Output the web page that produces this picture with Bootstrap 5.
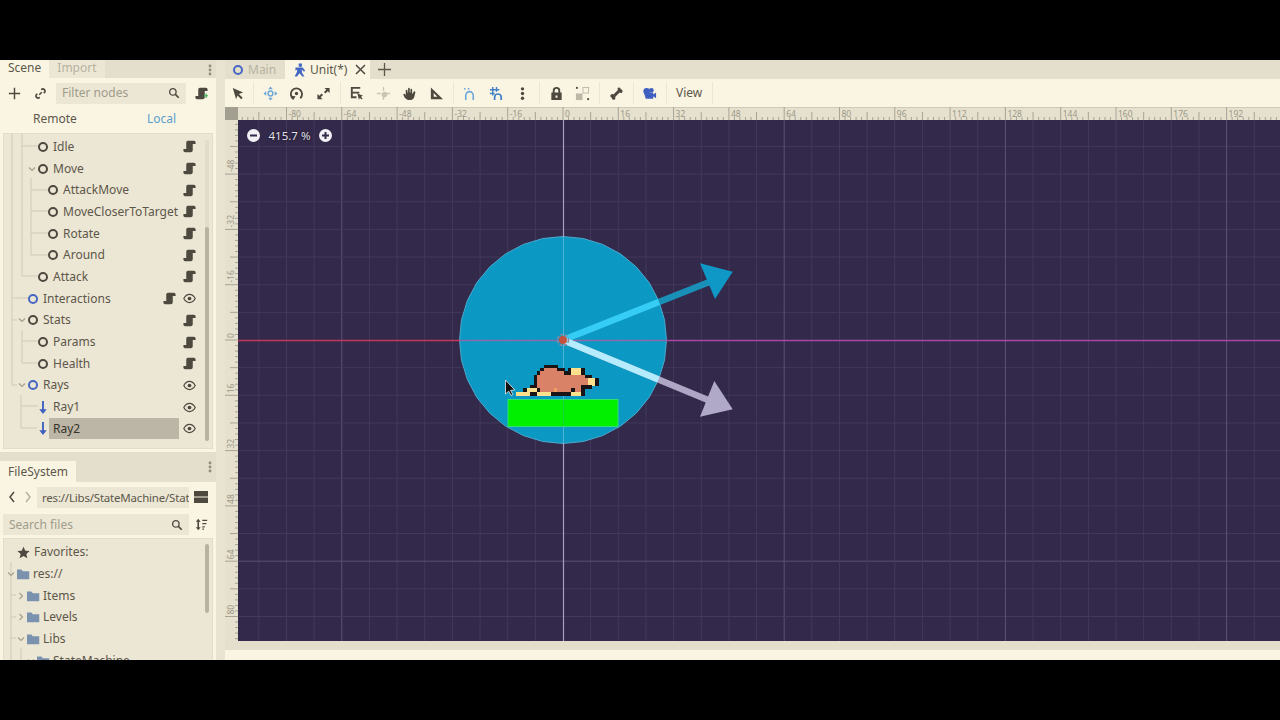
<!DOCTYPE html>
<html lang="en">
<head>
  <meta charset="UTF-8">
  <title>Godot Editor - Unit</title>
  <link rel="stylesheet" href="https://cdn.jsdelivr.net/npm/bootstrap@5.3.0/dist/css/bootstrap.min.css">
  <style>
    body { background: #000; font-family: "Noto Sans", "Liberation Sans", sans-serif; font-size: 12px; color: #5c574a; width: 1280px; height: 720px; overflow: hidden; }
    .gd-band { height: 60px; background: #000; }
    .gd-editor { height: 600px; background: #e9e4d1; overflow: hidden; }
    .gd-dock { width: 225px; }
    .gd-panel { width: 216px; background: #faf5e3; overflow: hidden; }
    .gd-strip { height: 18px; background: #e4dfcc; }
    .gd-strip2 { height: 30px; background: #e4dfcc; padding-top: 9px; }
    .gd-tab { height: 100%; padding: 0 8px; background: #faf5e3; line-height: 15px; }
    .gd-tab-off { background: #ece7d5; color: #b7b2a1; padding: 0 8px; }
    .gd-dots { width: 4px; height: 12px; margin-right: 4px; color: #8f8b7e; }
    .gd-field { background: #ece7d5; height: 21px; padding: 0 6px; color: #a09c8c; }
    .gd-scene-tools { height: 30px; padding-left: 8px; }
    .gd-mode { height: 25px; line-height: 21px; }
    .gd-mode-a { width: 107px; padding-left: 33px; }
    .gd-mode-b { color: #5b9dcc; padding-left: 40px; }
    .gd-tree { background: #ece6d4; margin: 0 3px; border: 1px solid #e2dcca; position: relative; overflow: hidden; }
    .gd-tree-scene { height: 316px; padding-top: 2px; }
    .gd-tree-files { height: 122px; padding-top: 2.5px; border-bottom: 0; }
    .gd-guides { position: absolute; left: -1px; top: -1px; pointer-events: none; }
    .gd-row { height: 21.7px; display: flex; align-items: center; padding-right: 16px; white-space: nowrap; position: relative; }
    .gd-d0 { padding-left: 24px; }
    .gd-d1 { padding-left: 34px; }
    .gd-d2 { padding-left: 44px; }
    .gd-node { width: 10px; height: 10px; border: 2px solid #4d493f; border-radius: 50%; margin-right: 5px; flex: none; }
    .gd-node-blue { border-color: #4467c4; }
    .gd-chev { width: 8px; height: 8px; margin-left: -10px; margin-right: 2px; flex: none; color: #a5a08f; }
    .gd-ic { width: 13px; height: 13px; flex: none; color: #4d493f; }
    .gd-row .gd-ic + .gd-ic { margin-left: 7px; }
    .gd-ray { width: 10px; height: 13px; margin-right: 5px; flex: none; color: #3f5fc0; }
    .gd-sel-ray { width: 13px; height: 21px; display: flex; align-items: center; justify-content: center; margin-left: -2px; }
    .gd-sel-ray .gd-ray { margin: 0; }
    .gd-sel-name { width: 130px; height: 21px; line-height: 21px; background: #bcb6a6; color: #37332a; padding-left: 4px; }
    .gd-thumb { position: absolute; right: 3px; width: 4px; background: #b7b2a1; border-radius: 2px; }
    .gd-track { position: absolute; right: 3px; width: 4px; background: #e2dcc9; border-radius: 2px; }
    .gd-fsnav { height: 30px; padding-left: 8px; }
    .gd-navarrow { width: 8px; height: 12px; margin-right: 8px; color: #4d493f; flex: none; }
    .gd-path { width: 152px; color: #5c574a; padding: 0 5px; overflow: hidden; white-space: nowrap; line-height: 21px; font-size: 11.5px; letter-spacing: -.2px; }
    .gd-search-row { height: 25px; padding-left: 3px; margin-bottom: 1px; }
    .gd-folder { width: 12.5px; height: 12px; margin-right: 3.5px; color: #7a92ad; flex: none; }
    .gd-star { width: 13px; height: 13px; margin-right: 4px; color: #4d493f; flex: none; }
    .gd-main { width: 1055px; }
    .gd-doctabs { height: 19px; background: #e4dfcc; }
    .gd-doc { height: 19px; padding: 0 0 0 8px; width: 60px; color: #b7b2a1; }
    .gd-doc-on { width: 85px; background: #faf5e3; color: #5c574a; padding-left: 8px; }
    .gd-toolbar { height: 28px; background: #faf5e3; padding-left: 0; }
    .gd-tb { width: 26.5px; height: 22px; display: flex; align-items: center; justify-content: center; flex: none; }
    .gd-tb svg { width: 15px; height: 15px; color: #4d493f; }
    .gd-sep { width: 1px; height: 22px; background: #ece7d5; margin: 0 3px; flex: none; }
    .gd-view { padding: 0 7px 0 6px; }
    .gd-rulertop { height: 13px; }
    .gd-corner { width: 13px; height: 13px; background: #a29e90; flex: none; }
    .gd-rulerfill { display: block; }
    .gd-canvas-row { height: 521px; }
    .gd-canvas { width: 1042px; height: 521px; background: #33294a; position: relative; overflow: hidden; }
    .gd-zoombar { position: absolute; left: 9px; top: 7px; display: flex; align-items: center; color: #e6e2ee; font-size: 11.5px; text-shadow: 0 0 2px #000; }
    .gd-zoombtn { width: 13px; height: 13px; color: #f2f0f4; flex: none; }
    .gd-zoomval { width: 59px; text-align: center; }
    .gd-bottom { height: 19px; background: linear-gradient(#e4dfcc 0 9px, #faf5e3 9px); }
  </style>
</head>
<body>

<!-- icon set -->
<svg width="0" height="0" class="position-absolute">
  <defs>
    <symbol id="i-script" viewBox="0 0 16 16"><path fill="currentColor" d="M6 1h7.500A2 2 0 0 1 15.500 3v2H12v7.500A2.500 2.500 0 0 1 9.500 15H2.500A2 2 0 0 1 .5 13v-2H4V3A2 2 0 0 1 6 1z"/></symbol>
    <symbol id="i-eye" viewBox="0 0 16 16"><path fill="none" stroke="currentColor" stroke-width="1.500" d="M1 8c2-3.600 4.400-5 7-5s5 1.400 7 5c-2 3.600-4.400 5-7 5s-5-1.400-7-5z"/><circle cx="8" cy="8" r="2.300" fill="currentColor"/></symbol>
    <symbol id="i-down" viewBox="0 0 10 14"><path fill="currentColor" d="M4 0h2v9h3l-4 5-4-5h3z"/></symbol>
    <symbol id="i-chev" viewBox="0 0 8 8"><path fill="none" stroke="currentColor" stroke-width="1.200" d="M1 2.500l3 3 3-3"/></symbol>
    <symbol id="i-chevr" viewBox="0 0 8 8"><path fill="none" stroke="currentColor" stroke-width="1.200" d="M2.500 1l3 3-3 3"/></symbol>
    <symbol id="i-search" viewBox="0 0 16 16"><circle cx="6.500" cy="6.500" r="4.300" fill="none" stroke="currentColor" stroke-width="1.800"/><path stroke="currentColor" stroke-width="2.200" d="M9.800 9.800l4.500 4.500"/></symbol>
    <symbol id="i-folder" viewBox="0 0 14 12"><path fill="currentColor" d="M0 1h5l1.500 2H14v9H0z"/></symbol>
    <symbol id="i-star" viewBox="0 0 16 16"><path fill="currentColor" d="M8 .8l2.200 4.900 5.300.6-4 3.500 1.200 5.300L8 12.300l-4.700 2.800 1.200-5.300-4-3.500 5.300-.6z"/></symbol>
    <symbol id="i-dots" viewBox="0 0 4 12"><circle cx="2" cy="2" r="1.400" fill="currentColor"/><circle cx="2" cy="6" r="1.400" fill="currentColor"/><circle cx="2" cy="10" r="1.400" fill="currentColor"/></symbol>
  </defs>
</svg>

<div class="gd-band"></div>

<div class="gd-editor d-flex">

  <!-- LEFT DOCK -->
  <div class="gd-dock flex-none">
    <div class="gd-panel" style="height:392px">
      <div class="gd-strip d-flex align-items-stretch">
        <div class="gd-tab">Scene</div>
        <div class="gd-tab gd-tab-off">Import</div>
        <svg class="gd-dots ms-auto mt-1"><use href="#i-dots"/></svg>
      </div>
      <div class="gd-scene-tools d-flex align-items-center">
        <svg class="gd-ic" viewBox="0 0 16 16" style="margin-right:13px"><path stroke="currentColor" stroke-width="1.800" d="M8 1v14M1 8h14"/></svg>
        <svg class="gd-ic" viewBox="0 0 16 16" style="margin-right:9px"><path fill="none" stroke="currentColor" stroke-width="2" d="M6.500 9.500l3-3M9 3.500l1-1a2.800 2.800 0 0 1 3.500 3.500l-1.500 1.500M7 12.500l-1 1A2.800 2.800 0 0 1 2.500 10L4 8.500"/></svg>
        <div class="gd-field d-flex align-items-center" style="width:130px">
          <span>Filter nodes</span>
          <svg class="gd-ic ms-auto" viewBox="0 0 16 16" style="width:12px;height:12px"><use href="#i-search"/></svg>
        </div>
        <svg class="gd-ic" viewBox="0 0 16 16" style="margin-left:9px"><use href="#i-script"/><path fill="#43b05a" d="M11 10h2V8h1.500v2h1.500v1.500h-1.500v2H13v-2h-2z"/></svg>
      </div>
      <div class="gd-mode d-flex">
        <div class="gd-mode-a">Remote</div>
        <div class="gd-mode-b">Local</div>
      </div>
      <div class="gd-tree gd-tree-scene">
        <svg class="gd-guides" width="210" height="316" viewBox="3 133 210 316" id="sceneGuides"></svg>
        <div class="gd-track" style="top:6px;height:300px"></div>
        <div class="gd-thumb" style="top:93px;height:214px"></div>
        <div class="gd-row gd-d1"><span class="gd-node"></span>Idle<svg class="gd-ic ms-auto"><use href="#i-script"/></svg></div>
        <div class="gd-row gd-d1"><svg class="gd-chev"><use href="#i-chev"/></svg><span class="gd-node"></span>Move<svg class="gd-ic ms-auto"><use href="#i-script"/></svg></div>
        <div class="gd-row gd-d2"><span class="gd-node"></span>AttackMove<svg class="gd-ic ms-auto"><use href="#i-script"/></svg></div>
        <div class="gd-row gd-d2"><span class="gd-node"></span>MoveCloserToTarget<svg class="gd-ic ms-auto"><use href="#i-script"/></svg></div>
        <div class="gd-row gd-d2"><span class="gd-node"></span>Rotate<svg class="gd-ic ms-auto"><use href="#i-script"/></svg></div>
        <div class="gd-row gd-d2"><span class="gd-node"></span>Around<svg class="gd-ic ms-auto"><use href="#i-script"/></svg></div>
        <div class="gd-row gd-d1"><span class="gd-node"></span>Attack<svg class="gd-ic ms-auto"><use href="#i-script"/></svg></div>
        <div class="gd-row gd-d0"><span class="gd-node gd-node-blue"></span>Interactions<svg class="gd-ic ms-auto"><use href="#i-script"/></svg><svg class="gd-ic"><use href="#i-eye"/></svg></div>
        <div class="gd-row gd-d0"><svg class="gd-chev"><use href="#i-chev"/></svg><span class="gd-node"></span>Stats<svg class="gd-ic ms-auto"><use href="#i-script"/></svg></div>
        <div class="gd-row gd-d1"><span class="gd-node"></span>Params<svg class="gd-ic ms-auto"><use href="#i-script"/></svg></div>
        <div class="gd-row gd-d1"><span class="gd-node"></span>Health<svg class="gd-ic ms-auto"><use href="#i-script"/></svg></div>
        <div class="gd-row gd-d0"><svg class="gd-chev"><use href="#i-chev"/></svg><span class="gd-node gd-node-blue"></span>Rays<svg class="gd-ic ms-auto"><use href="#i-eye"/></svg></div>
        <div class="gd-row gd-d1"><svg class="gd-ray"><use href="#i-down"/></svg>Ray1<svg class="gd-ic ms-auto"><use href="#i-eye"/></svg></div>
        <div class="gd-row gd-d1"><span class="gd-sel-ray"><svg class="gd-ray"><use href="#i-down"/></svg></span><span class="gd-sel-name">Ray2</span><svg class="gd-ic ms-auto"><use href="#i-eye"/></svg></div>
      </div>
    </div>

    <div class="gd-strip2 d-flex align-items-stretch" style="width:216px">
      <div class="gd-tab" style="line-height:21px">FileSystem</div>
      <svg class="gd-dots ms-auto"><use href="#i-dots"/></svg>
    </div>
    <div class="gd-panel" style="height:178px">
      <div class="gd-fsnav d-flex align-items-center">
        <svg class="gd-navarrow" viewBox="0 0 8 12"><path fill="none" stroke="currentColor" stroke-width="1.500" d="M6 1L2 6l4 5"/></svg>
        <svg class="gd-navarrow" viewBox="0 0 8 12" style="color:#b7b2a1;margin-right:5px"><path fill="none" stroke="currentColor" stroke-width="1.500" d="M2 1l4 5-4 5"/></svg>
        <div class="gd-field gd-path">res://Libs/StateMachine/Stat</div>
        <svg class="gd-ic" viewBox="0 0 14 14" style="width:14px;height:14px;margin-left:5px"><path fill="currentColor" d="M0 1h14v5.500H0zM0 7.500h14V13H0z"/></svg>
      </div>
      <div class="gd-search-row d-flex align-items-center">
        <div class="gd-field d-flex align-items-center" style="width:186px">
          <span>Search files</span>
          <svg class="gd-ic ms-auto" viewBox="0 0 16 16" style="width:12px;height:12px"><use href="#i-search"/></svg>
        </div>
        <svg class="gd-ic" viewBox="0 0 16 16" style="margin-left:6px"><path fill="currentColor" d="M4 1l3 3.500H5v7h2L4 15l-3-3.500h2v-7H1zM9 2h6v1.600H9zM9 6h5v1.600H9zM9 10h3v1.600H9zM9 13h2v1.600H9z"/></svg>
      </div>
      <div class="gd-tree gd-tree-files">
        <svg class="gd-guides" width="210" height="125" viewBox="3 538 210 125" id="fileGuides"></svg>
        <div class="gd-thumb" style="top:5px;height:69px"></div>
        <div class="gd-row" style="padding-left:13px"><svg class="gd-star"><use href="#i-star"/></svg>Favorites:</div>
        <div class="gd-row" style="padding-left:13px"><svg class="gd-chev"><use href="#i-chev"/></svg><svg class="gd-folder"><use href="#i-folder"/></svg>res://</div>
        <div class="gd-row" style="padding-left:23px"><svg class="gd-chev"><use href="#i-chevr"/></svg><svg class="gd-folder"><use href="#i-folder"/></svg>Items</div>
        <div class="gd-row" style="padding-left:23px"><svg class="gd-chev"><use href="#i-chevr"/></svg><svg class="gd-folder"><use href="#i-folder"/></svg>Levels</div>
        <div class="gd-row" style="padding-left:23px"><svg class="gd-chev"><use href="#i-chev"/></svg><svg class="gd-folder"><use href="#i-folder"/></svg>Libs</div>
        <div class="gd-row" style="padding-left:33px"><svg class="gd-chev"><use href="#i-chev"/></svg><svg class="gd-folder"><use href="#i-folder"/></svg>StateMachine</div>
      </div>
    </div>
  </div>

  <!-- MAIN AREA -->
  <div class="gd-main d-flex flex-column">
    <div class="gd-doctabs d-flex align-items-center">
      <div class="gd-doc d-flex align-items-center"><span class="gd-node gd-node-blue"></span>Main</div>
      <div class="gd-doc gd-doc-on d-flex align-items-center">
        <svg width="13" height="14" viewBox="0 0 16 16" class="me-1 flex-none" style="color:#4467c4"><path fill="currentColor" d="M7 0h4v4H7zM3 5h9l3 4-1.500 1-2.500-2.500V11l3 5h-2.500L8 12l-3 4H2l3-6V7.500L3 9z"/></svg>
        <span>Unit(*)</span>
        <svg width="11" height="11" viewBox="0 0 11 11" class="ms-auto me-1"><path stroke="#4d493f" stroke-width="1.500" d="M1 1l9 9M10 1l-9 9"/></svg>
      </div>
      <svg width="13" height="13" viewBox="0 0 13 13" style="margin-left:8px"><path stroke="#5c574a" stroke-width="1.300" d="M6.500 0v13M0 6.500h13"/></svg>
    </div>

    <div class="gd-toolbar d-flex align-items-center">
      <div class="gd-tb" style="width:25px"><svg viewBox="0 0 16 16"><path fill="currentColor" d="M3 2l11 5-4.500 1.500 4 4-1.500 1.500-4-4L6.500 14z"/></svg></div>
      <div class="gd-sep"></div>
      <div class="gd-tb"><svg viewBox="0 0 16 16" style="color:#6ba6d8"><path fill="currentColor" d="M8 .5L10.500 3.500h-5zM8 15.500L5.500 12.500h5zM.5 8l3-2.500v5zM15.500 8l-3 2.500v-5z"/><circle cx="8" cy="8" r="2.600" fill="none" stroke="currentColor" stroke-width="1.500"/></svg></div>
      <div class="gd-tb"><svg viewBox="0 0 16 16"><path fill="none" stroke="currentColor" stroke-width="2" d="M4.500 13.500A6 6 0 1 1 12 13"/><path fill="currentColor" d="M2 10.500l5 .5-2.500 4z"/><circle cx="8" cy="8" r="1.800" fill="currentColor"/></svg></div>
      <div class="gd-tb"><svg viewBox="0 0 16 16"><path fill="currentColor" d="M9 2h5.500v5.500l-2-2L10 8 8.500 6.500 11 4zM7 14H1.500V8.500l2 2L6 8l1.500 1.500L5 12z"/></svg></div>
      <div class="gd-sep"></div>
      <div class="gd-tb"><svg viewBox="0 0 16 16"><path fill="currentColor" d="M2 1h10v2H4v3h7v2H4v3h4v2H2zM9 8l6 2.500-2.300.9 1.800 2-1.200 1.100-1.800-2-.9 2.300z"/></svg></div>
      <div class="gd-tb"><svg viewBox="0 0 16 16" style="color:#c9c4b4"><path stroke="currentColor" stroke-width="1.400" d="M8 1v4M8 11v4M1 8h4M11 8h4"/><circle cx="9" cy="9" r="3" fill="currentColor"/></svg></div>
      <div class="gd-tb"><svg viewBox="0 0 16 16"><path fill="currentColor" d="M4 7V4.500a1 1 0 0 1 1.800 0V7h.7V2.500a1 1 0 0 1 1.800 0V7H9V3.500a1 1 0 0 1 1.800 0V8l.7.100.9-2.100a1 1 0 0 1 1.800.8L13 12c-.8 2-2.300 3-4.500 3C5.500 15 3 13.500 1.500 9.500a1 1 0 0 1 1.800-.8L4 10z"/></svg></div>
      <div class="gd-tb"><svg viewBox="0 0 16 16"><path fill="currentColor" fill-rule="evenodd" d="M2 1.500L15 14H2zM5 7.500V11.500h4z"/></svg></div>
      <div class="gd-sep"></div>
      <div class="gd-tb"><svg viewBox="0 0 16 16" style="color:#6ba6d8"><path fill="none" stroke="currentColor" stroke-width="1.700" d="M4 15V10a4 4 0 0 1 8 0v5"/><circle cx="3" cy="3" r="1" fill="currentColor"/><circle cx="7" cy="3" r="1" fill="currentColor"/></svg></div>
      <div class="gd-tb"><svg viewBox="0 0 16 16" style="color:#3f7fc8"><path stroke="currentColor" stroke-width="1.500" d="M1 4h10M1 8h5M4 1v9M8 1v5"/><path fill="none" stroke="currentColor" stroke-width="1.800" d="M6 15v-3a3.500 3.500 0 0 1 7 0v3"/></svg></div>
      <div class="gd-tb"><svg viewBox="0 0 16 16"><circle cx="8" cy="3" r="1.800" fill="currentColor"/><circle cx="8" cy="8" r="1.800" fill="currentColor"/><circle cx="8" cy="13" r="1.800" fill="currentColor"/></svg></div>
      <div class="gd-sep"></div>
      <div class="gd-tb"><svg viewBox="0 0 16 16"><path fill="currentColor" fill-rule="evenodd" d="M2.500 7H4V5a4 4 0 0 1 8 0v2h1.500v8h-11zM6 7h4V5a2 2 0 0 0-4 0zM7 10v2.500h2V10z"/></svg></div>
      <div class="gd-tb"><svg viewBox="0 0 16 16" style="color:#bcb7a7"><rect x="1" y="8" width="7" height="7" fill="currentColor"/><rect x="8.500" y="1.500" width="6" height="6" fill="none" stroke="currentColor"/><rect x="1" y="1" width="2" height="2" fill="#4d493f"/><rect x="13" y="13" width="2" height="2" fill="#4d493f"/></svg></div>
      <div class="gd-sep"></div>
      <div class="gd-tb"><svg viewBox="0 0 16 16"><path fill="currentColor" d="M10.500 1.500a2 2 0 0 1 2 2 2 2 0 0 1 1.500 3.300c-.8.700-2 .7-2.700.2L6.500 11.800c.5.700.4 1.800-.3 2.500A2 2 0 0 1 3 12.500 2 2 0 0 1 2 9.200c.8-.8 2-.7 2.700-.2L9.500 4.200c-.5-.7-.4-1.700.2-2.400.2-.2.500-.3.800-.3z"/></svg></div>
      <div class="gd-sep"></div>
      <div class="gd-tb"><svg viewBox="0 0 16 16" style="color:#3f5fc0"><circle cx="5" cy="5.500" r="3.500" fill="currentColor"/><circle cx="10" cy="4.500" r="2.500" fill="currentColor"/><path fill="currentColor" d="M2 7h10v2l3-2v6l-3-2v2.500H4z"/></svg></div>
      <div class="gd-sep"></div>
      <div class="gd-view">View</div>
      <div class="gd-sep"></div>
    </div>

    <div class="gd-rulertop d-flex">
      <div class="gd-corner"></div>
      <svg class="gd-rulerfill" width="1042" height="13" viewBox="238 107 1042 13" id="rulerTop"></svg>
    </div>

    <div class="gd-canvas-row d-flex">
      <svg class="gd-rulerfill flex-none" width="13" height="521" viewBox="225 120 13 521" id="rulerLeft"></svg>
      <div class="gd-canvas">
        <svg width="1042" height="521" viewBox="238 120 1042 521" id="stage" class="d-block"></svg>
        <div class="gd-zoombar">
          <svg class="gd-zoombtn" viewBox="0 0 13 13"><path fill="currentColor" fill-rule="evenodd" d="M6.500 0a6.500 6.500 0 1 1 0 13 6.500 6.500 0 0 1 0-13zM3 5.500v2h7v-2z"/></svg>
          <span class="gd-zoomval">415.7 %</span>
          <svg class="gd-zoombtn" viewBox="0 0 13 13"><path fill="currentColor" fill-rule="evenodd" d="M6.500 0a6.500 6.500 0 1 1 0 13 6.500 6.500 0 0 1 0-13zM5.500 3v2.500H3v2h2.500V10h2V7.500H10v-2H7.500V3z"/></svg>
        </div>
      </div>
    </div>

    <div class="gd-bottom"></div>
  </div>
</div>

<div class="gd-band"></div>

<script>
  const SVGNS = "http://www.w3.org/2000/svg";
  const OX = 563, OY = 340, CELL = 27.65;

  function add(parent, tag, attrs, text) {
    const el = document.createElementNS(SVGNS, tag);
    for (const k in attrs) el.setAttribute(k, attrs[k]);
    if (text !== undefined) el.textContent = text;
    parent.appendChild(el);
    return el;
  }
  function line(parent, x1, y1, x2, y2, color, w) {
    return add(parent, "line", { x1, y1, x2, y2, stroke: color, "stroke-width": w || 1 });
  }

  // tree guide lines
  const sg = document.getElementById("sceneGuides");
  const gc = "#cfc9b6";
  [[12,133,12,385],[22,133,22,276],[22,146,38,146],[22,276,38,276],[31,178,31,255],[31,190,48,190],[31,211,48,211],[31,233,48,233],[31,255,48,255],
   [12,298,28,298],[12,320,17,320],[12,385,17,385],[22,330,22,363],[22,341,38,341],[22,363,38,363],[21,395,21,428],[21,406,38,406],[21,428,37,428]]
    .forEach(l => line(sg, l[0], l[1], l[2], l[3], gc));
  const fg = document.getElementById("fileGuides");
  [[11,562,11,660],[11,595,16,595],[11,617,16,617],[11,638,16,638],[21,648,21,660]]
    .forEach(l => line(fg, l[0], l[1], l[2], l[3], gc));

  // rulers
  const top_ = document.getElementById("rulerTop");
  add(top_, "rect", { x: 238, y: 107, width: 1042, height: 13, fill: "#e6e1ce" });
  line(top_, 238, 107.5, 1280, 107.5, "#cfc9b6");
  const left_ = document.getElementById("rulerLeft");
  add(left_, "rect", { x: 225, y: 120, width: 13, height: 521, fill: "#e6e1ce" });
  const tickC = "#a8a394", lblC = "#9c9888";
  for (let i = -70; i <= 140; i++) {
    const x = OX + i * CELL / 5;
    if (x >= 238 && x <= 1280) {
      if (i % 10 === 0) {
        line(top_, x, 107, x, 120, tickC);
        add(top_, "text", { x: x + 2, y: 116.5, "font-size": 8.5, fill: lblC, "font-family": "Noto Sans" }, String(i * 1.6));
      } else if (i % 5 === 0) line(top_, x, 112, x, 120, tickC);
      else line(top_, x, 117, x, 120, tickC);
    }
    const y = OY + i * CELL / 5;
    if (y >= 120 && y <= 641) {
      if (i % 10 === 0) {
        line(left_, 225, y, 238, y, tickC);
        add(left_, "text", { transform: `translate(233.500 ${y - 2}) rotate(-90)`, "font-size": 8.5, fill: lblC, "font-family": "Noto Sans" }, String(i * 1.6));
      } else if (i % 5 === 0) line(left_, 230, y, 238, y, tickC);
      else line(left_, 235, y, 238, y, tickC);
    }
  }

  // canvas
  const st = document.getElementById("stage");
  for (let i = -12; i <= 27; i++) {
    const x = OX + i * CELL;
    const major = i % 8 === 0;
    if (x >= 238 && x <= 1280 && i !== 0) line(st, x, 120, x, 641, major ? "#5c5276" : "#43395c");
    const y = OY + i * CELL;
    if (y >= 120 && y <= 641 && i !== 0) line(st, 238, y, 1280, y, major ? "#5c5276" : "#43395c");
  }

  // collision circle, polygon like the editor draws it
  let pts = [];
  for (let i = 0; i < 32; i++) {
    const a = i / 32 * Math.PI * 2;
    pts.push((OX + 103.5 * Math.cos(a)).toFixed(1) + "," + (OY + 103.5 * Math.sin(a)).toFixed(1));
  }
  const defs = add(st, "defs", {});
  const clip = add(defs, "clipPath", { id: "inCircle" });
  add(clip, "polygon", { points: pts.join(" ") });
  add(st, "polygon", { points: pts.join(" "), fill: "#08a0cc", "fill-opacity": ".94", stroke: "#4aa9cd" });

  // axes
  line(st, 238, OY + .5, 460, OY + .5, "#bf3a5e", 1.4);
  line(st, 460, OY + .5, 666, OY + .5, "#8a6aa8", 1.4);
  line(st, 666, OY + .5, 1280, OY + .5, "#a548a8", 1.4);
  line(st, OX + .5, 120, OX + .5, 237, "#a99ec2", 1.2);
  line(st, OX + .5, 237, OX + .5, 443, "#4fb6d8", 1);
  line(st, OX + .5, 443, OX + .5, 641, "#a99ec2", 1.2);

  // rays
  function ray(tipA, tipB, tipC, endX, endY, colIn, colOut, colHead) {
    add(st, "line", { x1: OX, y1: OY, x2: endX, y2: endY, stroke: colOut, "stroke-width": 6.500 });
    add(st, "line", { x1: OX, y1: OY, x2: endX, y2: endY, stroke: colIn, "stroke-width": 6.500, "clip-path": "url(#inCircle)" });
    add(st, "polygon", { points: `${tipA} ${tipB} ${tipC}`, fill: colHead });
  }
  ray("732.7,271.7", "700,263.3", "715,299", 710, 281.7, "#35cdf6", "#1a90b8", "#0f98c6");
  ray("732.7,409.3", "714.3,381", "700,416.7", 708, 400, "#b5ecfd", "#aea6c4", "#b0aac8");

  // origin gizmo
  add(st, "circle", { cx: OX, cy: OY, r: 5.500, fill: "none", stroke: "#8f8aa0", "stroke-width": 1.500, "stroke-dasharray": "3 1.500" });
  add(st, "circle", { cx: OX, cy: OY, r: 4, fill: "#c4503f" });

  // green body rectangle
  add(st, "rect", { x: 508, y: 399.500, width: 110, height: 27, fill: "#00f000", stroke: "#30e070" });
  line(st, OX + .5, 400, OX + .5, 426, "#14d838");

  // rat sprite
  const rat = [
    ".........kkkk............",
    "........kppppkk.kyyyk....",
    ".......kpppppppkkyyyk....",
    "......kppppppppppppppkk..",
    "......kpppppppppppppppyyk",
    "......kpppppppppppppppyyk",
    ".....kkpppppppppppppkkk..",
    "...kyyykppppoppppkppk....",
    ".yyyykkyyyykkkkkkyyyk...."
  ];
  const ratCol = { k: "#1a1416", p: "#d98268", y: "#fde08e", o: "#ee9f5e" };
  const PX = 3.42, RX = 513, RY = 364.5;
  const ratG = add(st, "g", { "shape-rendering": "crispEdges" });
  rat.forEach((row, r) => [...row].forEach((c, i) => {
    if (ratCol[c]) add(ratG, "rect", { x: RX + i * PX, y: RY + r * PX, width: PX + .6, height: PX + .6, fill: ratCol[c] });
  }));

  // mouse pointer
  add(st, "path", { d: "M505.500 380v14l3.200-2.800 2.300 4.300 1.800-1-2.200-4.200 4.200-.3z", fill: "#111", stroke: "#eee", "stroke-width": .8 });
</script>
</body>
</html>
